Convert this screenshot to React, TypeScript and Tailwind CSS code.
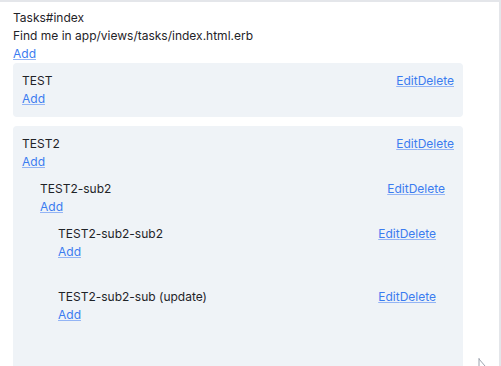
import React from "react";

type Task = {
  title: string;
  children?: Task[];
  tail?: boolean;
};

const tasks: Task[] = [
  { title: "TEST" },
  {
    title: "TEST2",
    children: [
      {
        title: "TEST2-sub2",
        children: [
          { title: "TEST2-sub2-sub2" },
          { title: "TEST2-sub2-sub (update)", tail: true },
        ],
      },
    ],
  },
];

function TaskCard({ task, nested }: { task: Task; nested?: boolean }) {
  return (
    <div className={nested ? "ml-[9px] rounded bg-[#eff3f7] p-[9px]" : "rounded bg-[#eff3f7] p-[9px]"}>
      <div className="flex items-start justify-between">
        <span>{task.title}</span>
        <span className="flex">
          <a href="#" className="text-[#3b7cf0] underline decoration-[#93b4f5]">
            Edit
          </a>
          <a href="#" className="text-[#3b7cf0] underline decoration-[#93b4f5]">
            Delete
          </a>
        </span>
      </div>
      <a href="#" className="text-[#3b7cf0] underline decoration-[#93b4f5]">
        Add
      </a>
      {task.children && (
        <div className="flex flex-col gap-[9px]">
          {task.children.map((c) => (
            <TaskCard key={c.title} task={c} nested />
          ))}
        </div>
      )}
      {task.tail && <div className="h-[60px]" />}
    </div>
  );
}

export default function App() {
  return (
    <div className="h-[366px] w-[501px] overflow-hidden bg-white">
      <div
        className="relative h-full w-[501px] border-t-2 border-r-2 border-[#e4e6ea] pl-[13px] pt-[7px] text-[12px] leading-[18px] text-[#1f2328]"
        style={{ fontFamily: "Inter, 'Noto Sans', sans-serif" }}
      >
        <div className="w-[450px]">
          <div>Tasks#index</div>
          <div>Find me in app/views/tasks/index.html.erb</div>
          <a href="#" className="text-[#3b7cf0] underline decoration-[#93b4f5]">
            Add
          </a>
          <div className="flex flex-col gap-[9px]">
            {tasks.map((t) => (
              <TaskCard key={t.title} task={t} />
            ))}
          </div>
        </div>
        <svg className="absolute bottom-0 right-[13px]" width="8" height="8" viewBox="0 0 8 8">
          <path d="M1 0 V8 M1 1 L7 8" stroke="#9ca3af" strokeWidth="1" fill="none" />
        </svg>
      </div>
    </div>
  );
}
